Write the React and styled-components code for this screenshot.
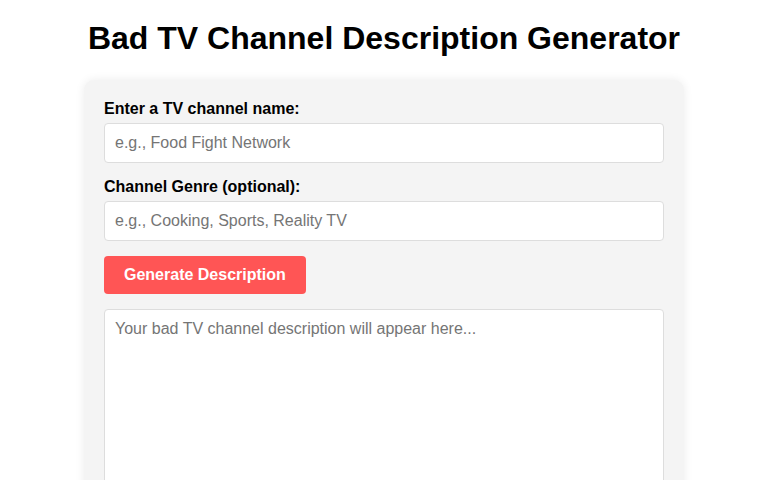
import React from "react";
import styled, { createGlobalStyle } from "styled-components";

const Global = createGlobalStyle`
  html, body { margin: 0; padding: 0; background: #fff; }
  body { font-family: "Liberation Sans", Arial, sans-serif; color: #000; }
  * { box-sizing: border-box; }
`;

const Page = styled.div`
  display: flex;
  flex-direction: column;
  align-items: center;
  padding: 20px;
`;

const Title = styled.h1`
  margin: 0 0 23px;
  font-size: 32px;
  font-weight: bold;
  text-align: center;
`;

const Card = styled.div`
  width: 600px;
  padding: 20px;
  background: #f4f4f4;
  border-radius: 10px;
  box-shadow: 0 0 10px rgba(0, 0, 0, 0.08);
  display: flex;
  flex-direction: column;
  align-items: flex-start;
`;

const Label = styled.label`
  display: block;
  font-weight: bold;
  font-size: 16px;
  margin-bottom: 5px;
`;

const Input = styled.input`
  width: 100%;
  padding: 10px;
  font-size: 16px;
  font-family: inherit;
  border: 1px solid #ddd;
  border-radius: 4px;
  background: #fff;
  margin-bottom: 15px;
  &::placeholder { color: #757575; }
`;

const Button = styled.button`
  padding: 10px 20px;
  font-size: 16px;
  font-weight: bold;
  font-family: inherit;
  color: #fff;
  background: #ff5555;
  border: none;
  border-radius: 4px;
  margin-bottom: 15px;
  cursor: pointer;
`;

const Output = styled.textarea`
  width: 100%;
  height: 200px;
  padding: 10px;
  font-size: 16px;
  font-family: inherit;
  border: 1px solid #ddd;
  border-radius: 4px;
  background: #fff;
  resize: vertical;
  &::placeholder { color: #757575; }
`;

export default function App() {
  return (
    <>
      <Global />
      <Page>
        <Title>Bad TV Channel Description Generator</Title>
        <Card>
          <Label htmlFor="name">Enter a TV channel name:</Label>
          <Input id="name" placeholder="e.g., Food Fight Network" />
          <Label htmlFor="genre">Channel Genre (optional):</Label>
          <Input id="genre" placeholder="e.g., Cooking, Sports, Reality TV" />
          <Button>Generate Description</Button>
          <Output readOnly placeholder="Your bad TV channel description will appear here..." />
        </Card>
      </Page>
    </>
  );
}
